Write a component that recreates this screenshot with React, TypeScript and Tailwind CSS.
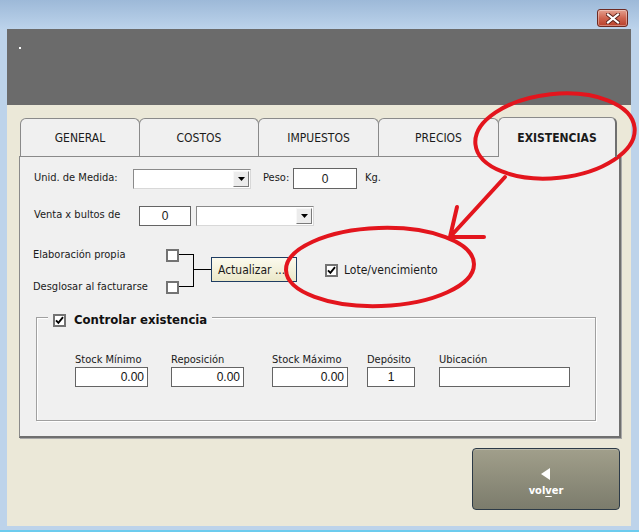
import React from "react";

const Check = ({ checked }: { checked?: boolean }) => (
  <div className="w-[13px] h-[13px] border-2 border-[#737373] bg-white flex items-center justify-center shrink-0">
    {checked && (
      <svg width="9" height="9" viewBox="0 0 9 9">
        <path d="M1 4.3 L3.4 6.8 L8 1.2" stroke="#000" strokeWidth="1.9" fill="none" />
      </svg>
    )}
  </div>
);

const Combo = ({ w }: { w: string }) => (
  <div className={`${w} h-[20px] border border-[#8a8a8a] border-r-[#d8d8d8] border-b-[#d8d8d8] bg-white flex justify-end items-stretch p-[1px]`}>
    <div className="w-[16px] bg-[#ececec] border border-t-[#f8f8f8] border-l-[#f8f8f8] border-r-[#7a7a7a] border-b-[#7a7a7a] flex items-center justify-center">
      <svg width="7" height="4" viewBox="0 0 7 4">
        <path d="M0 0 H7 L3.5 4Z" fill="#000" />
      </svg>
    </div>
  </div>
);

const Tab = ({ label, w, active }: { label: string; w: string; active?: boolean }) => (
  <div
    className={`${w} flex items-center justify-center rounded-t-[6px] border border-[#8a8a8a] bg-[#f0f0f0] text-[12px] text-[#1a1a1a] ${
      active ? "h-[40px] border-b-0 border-r-2 border-r-[#6f6f6f] font-bold relative z-10 pt-[1px]" : "h-[39px] border-b-0"
    }`}
  >
    {label}
  </div>
);

const Field = ({ label, w, value, align, ml }: { label: string; w: string; value?: string; align: string; ml: string }) => (
  <div className={`${ml} flex flex-col`}>
    <div className="h-[13px] leading-[12px] text-[11px] text-[#1a1a1a] whitespace-nowrap">{label}</div>
    <div className={`${w} h-[20px] border border-[#646464] bg-white flex items-center px-[3px] text-[12px] text-[#111] font-['Liberation_Sans',sans-serif] ${align}`}>
      {value}
    </div>
  </div>
);

export default function App() {
  return (
    <div className="relative w-[639px] h-[532px] overflow-hidden bg-[#bdd3ea] flex flex-col font-['DejaVu_Sans_Condensed','DejaVu_Sans',sans-serif] text-[11px] text-[#1a1a1a]">
      {/* title bar */}
      <div className="h-[29px] shrink-0 bg-gradient-to-b from-[#9db9d8] to-[#bcd3eb] flex items-start justify-end pr-[11px] pt-[9px]">
        <div className="w-[31px] h-[18px] rounded-[3px] border border-[#6e2a22] bg-gradient-to-b from-[#e3a08f] via-[#cf6550] to-[#b9402a] flex items-center justify-center shadow-[inset_0_0_0_1px_rgba(255,255,255,0.35)]">
          <svg width="14" height="11" viewBox="0 0 14 11">
            <path d="M2 1.5 L12 9.5 M12 1.5 L2 9.5" stroke="#5a2019" strokeWidth="4" strokeLinecap="square" />
            <path d="M2 1.5 L12 9.5 M12 1.5 L2 9.5" stroke="#ffffff" strokeWidth="2.2" strokeLinecap="square" />
          </svg>
        </div>
      </div>

      {/* middle */}
      <div className="flex flex-1">
        <div className="w-[7px] shrink-0" />
        <div className="w-[624px] flex flex-col">
          {/* gray header */}
          <div className="h-[76px] bg-[#6b6b6b] relative">
            <div className="absolute left-[12px] top-[18px] w-[2px] h-[2px] bg-white" />
          </div>
          {/* beige area */}
          <div className="h-[421px] bg-[#ebe8d8] flex flex-col pl-[12px] pt-[13px]">
            {/* tabs */}
            <div className="flex items-end pl-[1px] h-[39px] -mb-[1px]">
              <Tab label="GENERAL" w="w-[120px]" />
              <Tab label="COSTOS" w="w-[120px] -ml-px" />
              <Tab label="IMPUESTOS" w="w-[121px] -ml-px" />
              <Tab label="PRECIOS" w="w-[121px] -ml-px" />
              <Tab label="EXISTENCIAS" w="w-[119px] -ml-px" active />
            </div>
            {/* panel */}
            <div className="w-[602px] border border-[#8a8a8a] border-r-2 border-b-2 border-r-[#6f6f6f] border-b-[#6f6f6f] bg-[#f0f0f0] flex flex-col pl-[14px] pb-[15px] shadow-[1px_1px_0_#a8a8a8]">
              {/* row 1 */}
              <div className="flex items-center h-[21px] mt-[11px]">
                <div className="w-[99px]">Unid. de Medida:</div>
                <Combo w="w-[118px]" />
                <div className="ml-[12px] w-[30px]">Peso:</div>
                <div className="w-[64px] h-[21px] border border-[#646464] bg-white flex items-center justify-center text-[12px] font-['Liberation_Sans',sans-serif]">0</div>
                <div className="ml-[8px]">Kg.</div>
              </div>
              {/* row 2 */}
              <div className="flex items-center h-[21px] mt-[16px]">
                <div className="w-[105px]">Venta x bultos de</div>
                <div className="w-[52px] h-[20px] border border-[#646464] bg-white flex items-center justify-center text-[12px] font-['Liberation_Sans',sans-serif]">0</div>
                <div className="ml-[5px]">
                  <Combo w="w-[118px]" />
                </div>
              </div>
              {/* row 3 */}
              <div className="flex items-start mt-[21px] h-[48px] -ml-[1px]">
                <div className="flex flex-col gap-[16px]">
                  <div className="flex items-center h-[16px]">
                    <div className="w-[133px]">Elaboración propia</div>
                    <Check />
                  </div>
                  <div className="flex items-center h-[16px]">
                    <div className="w-[133px]">Desglosar al facturarse</div>
                    <Check />
                  </div>
                </div>
                <div className="w-[15px] h-[33px] mt-[7px] border-t border-r border-b border-black" />
                <div className="w-[17px] h-px mt-[22px] bg-black" />
                <div className="w-[86px] h-[25px] mt-[10px] border border-[#1f3d63] bg-gradient-to-b from-[#fbfaee] to-[#ebe8c9] flex items-center pl-[6px] text-[12px] whitespace-nowrap overflow-hidden">
                  Actualizar ...
                </div>
                <div className="ml-[28px] mt-[14px] flex items-center gap-[6px]">
                  <Check checked />
                  <span className="text-[12px]">Lote/vencimiento</span>
                </div>
              </div>
              {/* group box */}
              <div className="relative ml-[2px] mt-[22px] w-[560px] h-[104px] border border-[#a0a0a0] shadow-[inset_1px_1px_0_#ffffff,1px_1px_0_#ffffff] flex items-start pt-[36px]">
                <div className="absolute left-[11px] -top-[6px] bg-[#f0f0f0] flex items-center gap-[8px] px-[5px] h-[16px]">
                  <Check checked />
                  <span className="text-[13px] font-bold text-[#111]">Controlar existencia</span>
                </div>
                <Field label="Stock Mínimo" w="w-[73px]" value="0.00" align="justify-end" ml="ml-[38px]" />
                <Field label="Reposición" w="w-[73px]" value="0.00" align="justify-end" ml="ml-[23px]" />
                <Field label="Stock Máximo" w="w-[76px]" value="0.00" align="justify-end" ml="ml-[28px]" />
                <Field label="Depósito" w="w-[48px]" value="1" align="justify-center" ml="ml-[19px]" />
                <Field label="Ubicación" w="w-[131px]" value="" align="justify-start" ml="ml-[24px]" />
              </div>
            </div>
            {/* volver */}
            <div className="flex justify-end pr-[11px] mt-[10px]">
              <div className="w-[148px] h-[62px] rounded-[4px] border border-[#2c3a47] bg-gradient-to-b from-[#a19f8b] to-[#7c7c6c] shadow-[inset_0_1px_0_rgba(255,255,255,0.25)] flex flex-col items-center justify-center gap-[4px] pt-[6px]">
                <svg width="10" height="12" viewBox="0 0 10 12">
                  <path d="M9 0 V12 L0 6Z" fill="#ffffff" />
                </svg>
                <span className="text-[11px] font-bold text-white leading-[13px]">
                  vol<span className="underline underline-offset-2">v</span>er
                </span>
              </div>
            </div>
          </div>
        </div>
        <div className="w-[8px] shrink-0" />
      </div>

      {/* bottom frame */}
      <div className="h-[6px] shrink-0 border-b-2 border-[#6ccbee]" />

      {/* red annotations */}
      <svg className="absolute inset-0 pointer-events-none" width="639" height="532" viewBox="0 0 639 532">
        <ellipse cx="555" cy="136" rx="80" ry="42" transform="rotate(-6 555 136)" stroke="#e3151d" strokeWidth="4" fill="none" />
        <ellipse cx="380" cy="267" rx="94" ry="39" transform="rotate(-2 380 267)" stroke="#e3151d" strokeWidth="4" fill="none" />
        <path d="M505 177 L450 237 M450 237 L484 237 M450 237 L457 207" stroke="#e3151d" strokeWidth="4" fill="none" strokeLinecap="round" />
      </svg>
    </div>
  );
}
